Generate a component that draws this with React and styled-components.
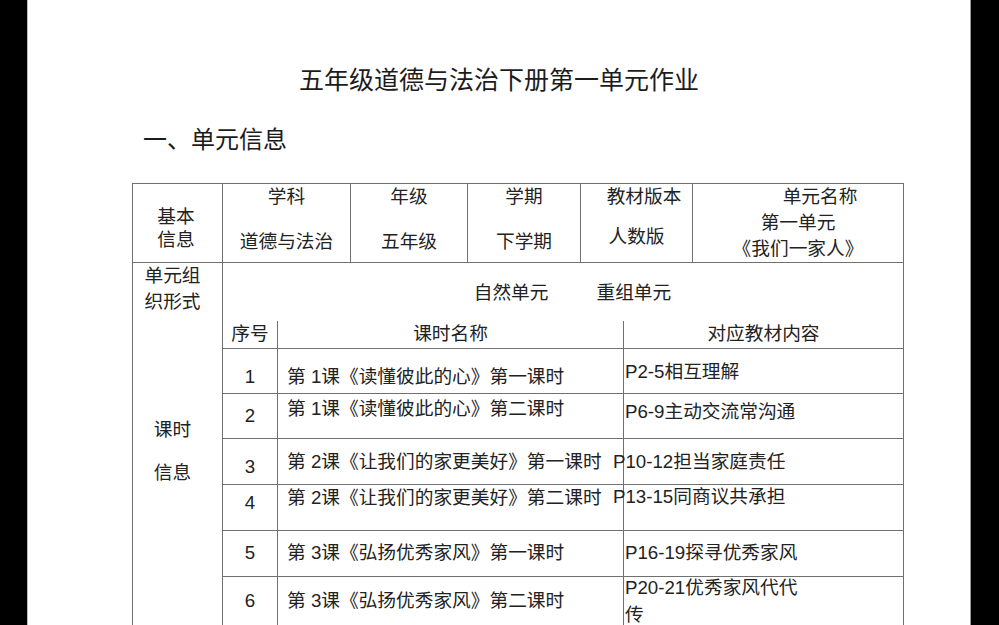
import React from 'react';
import styled, { createGlobalStyle } from 'styled-components';

const GlobalStyle = createGlobalStyle`
  * { box-sizing: border-box; }
  html, body {
    margin: 0;
    padding: 0;
    background: #000;
  }
  body {
    font-family: "Liberation Sans", "Noto Sans CJK SC", sans-serif;
    color: #222;
  }
`;

const line = '#707070';

const Page = styled.div`
  width: 944px;
  height: 625px;
  margin-left: 27px;
  background: #fff;
  border-left: 1px solid #bdbdbd;
  border-right: 1px solid #9a9a9a;
  overflow: hidden;
  padding-left: 104px;
  display: flex;
  flex-direction: column;
`;

const Title = styled.h1`
  margin: 62px 0 0 -104px;
  font-size: 25px;
  font-weight: normal;
  line-height: 36px;
  text-align: center;
  color: #1c1c1c;
`;

const Heading = styled.h2`
  margin: 26px 0 0 11px;
  font-size: 24px;
  font-weight: normal;
  line-height: 32px;
  color: #1c1c1c;
`;

const Sheet = styled.div`
  margin-top: 27px;
  width: 772px;
  border-top: 1px solid ${line};
  border-left: 1px solid ${line};
  font-size: 18.7px;
  flex: 1;
  display: flex;
  flex-direction: column;
`;

const InfoRow = styled.div`
  display: grid;
  grid-template-columns: 90px 128px 117px 113px 112px 211px;
  height: 79px;
`;

const InfoCell = styled.div`
  display: flex;
  flex-direction: column;
  align-items: center;
  border-right: 1px solid ${line};
  border-bottom: 1px solid ${line};
  line-height: ${p => p.$lh || 24}px;
  padding-top: ${p => p.$top || 0}px;
  padding-right: ${p => p.$right || 0}px;
`;

const Label = styled.div`
  margin-top: ${p => p.$top || 0}px;
  padding-left: ${p => p.$shift || 0}px;
  white-space: nowrap;
`;

const Body = styled.div`
  flex: 1;
  display: grid;
  grid-template-columns: 90px 681px;
`;

const SideCell = styled.div`
  border-right: 1px solid ${line};
  display: flex;
  flex-direction: column;
  align-items: center;
  padding-right: 10px;
  line-height: 26px;
`;

const Detail = styled.div`
  display: flex;
  flex-direction: column;
`;

const FormRow = styled.div`
  height: 58px;
  padding: 18px 0 0 19px;
  display: flex;
  justify-content: center;
  gap: 48px;
  line-height: 24px;
  border-right: 1px solid ${line};
`;

const LessonRow = styled.div`
  display: grid;
  grid-template-columns: 55px 346px 280px;
  height: ${p => p.$h}px;
`;

const Cell = styled.div`
  border-right: 1px solid ${line};
  border-bottom: 1px solid ${line};
  padding-left: ${p => p.$pad || 0}px;
  text-align: ${p => p.$align || 'left'};
  line-height: ${p => p.$lh || 24}px;
  white-space: nowrap;
`;

const Text = styled.div`
  margin-top: ${p => p.$top}px;
  margin-left: ${p => p.$indent || 0}px;
`;

const lessons = [
  { no: '1', name: '第 1课《读懂彼此的心》第一课时', content: ['P2-5相互理解'], h: 45, top: [16, 16, 11] },
  { no: '2', name: '第 1课《读懂彼此的心》第二课时', content: ['P6-9主动交流常沟通'], h: 45, top: [10, 3, 6] },
  { no: '3', name: '第 2课《让我们的家更美好》第一课时', content: ['P10-12担当家庭责任'], h: 46, top: [16, 11, 11], indent: -12 },
  { no: '4', name: '第 2课《让我们的家更美好》第二课时', content: ['P13-15同商议共承担'], h: 46, top: [6, 1, 0], indent: -12 },
  { no: '5', name: '第 3课《弘扬优秀家风》第一课时', content: ['P16-19探寻优秀家风'], h: 46, top: [10, 10, 10] },
  { no: '6', name: '第 3课《弘扬优秀家风》第二课时', content: ['P20-21优秀家风代代', '传'], h: 62, top: [12, 12, -3], lh: 27 },
];

export default function App() {
  return (
    <Page>
      <GlobalStyle />
      <Title>五年级道德与法治下册第一单元作业</Title>
      <Heading>一、单元信息</Heading>
      <Sheet>
        <InfoRow>
          <InfoCell $lh={23} $top={21} $right={3}>
            <div>基本</div>
            <div>信息</div>
          </InfoCell>
          <InfoCell $top={1}>
            <Label>学科</Label>
            <Label $top={21}>道德与法治</Label>
          </InfoCell>
          <InfoCell $top={1}>
            <Label>年级</Label>
            <Label $top={21}>五年级</Label>
          </InfoCell>
          <InfoCell $top={1}>
            <Label>学期</Label>
            <Label $top={21}>下学期</Label>
          </InfoCell>
          <InfoCell $top={1}>
            <Label $shift={15}>教材版本</Label>
            <Label $top={16}>人数版</Label>
          </InfoCell>
          <InfoCell $lh={26}>
            <Label $shift={44}>单元名称</Label>
            <Label>第一单元</Label>
            <Label>《我们一家人》</Label>
          </InfoCell>
        </InfoRow>
        <Body>
          <SideCell>
            <div>单元组</div>
            <div>织形式</div>
            <Label $top={102}>课时</Label>
            <Label $top={17}>信息</Label>
          </SideCell>
          <Detail>
            <FormRow>
              <span>自然单元</span>
              <span>重组单元</span>
            </FormRow>
            <LessonRow $h={28}>
              <Cell $align="center"><Text $top={1}>序号</Text></Cell>
              <Cell $align="center"><Text $top={1}>课时名称</Text></Cell>
              <Cell $align="center"><Text $top={1}>对应教材内容</Text></Cell>
            </LessonRow>
            {lessons.map(l => (
              <LessonRow key={l.no} $h={l.h}>
                <Cell $align="center"><Text $top={l.top[0]}>{l.no}</Text></Cell>
                <Cell $pad={9}><Text $top={l.top[1]}>{l.name}</Text></Cell>
                <Cell $pad={1} $lh={l.lh}>
                  <Text $top={l.top[2]} $indent={l.indent}>
                    {l.content.map(c => <div key={c}>{c}</div>)}
                  </Text>
                </Cell>
              </LessonRow>
            ))}
          </Detail>
        </Body>
      </Sheet>
    </Page>
  );
}
